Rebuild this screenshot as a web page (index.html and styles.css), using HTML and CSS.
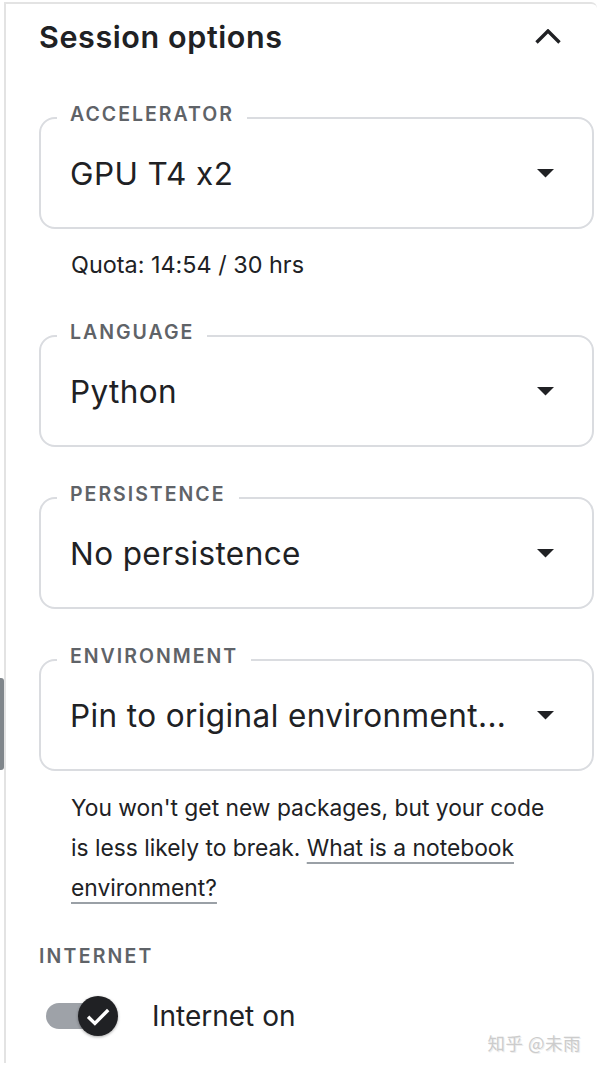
FILE: index.html
```html
<!DOCTYPE html>
<html lang="en">
<head>
<meta charset="utf-8">
<title>Session options</title>
<link rel="stylesheet" href="styles.css">
</head>
<body>
<div class="handle"></div>
<section class="panel">
  <header class="head">
    <h2 class="title">Session options</h2>
    <svg class="chev" width="28" height="16" viewBox="0 0 28 16"><polyline points="2.5,13.5 14,2 25.5,13.5"/></svg>
  </header>

  <fieldset class="field first">
    <legend>Accelerator</legend>
    <div class="select"><span>GPU T4 x2</span><svg class="caret" width="17" height="9" viewBox="0 0 17 9"><polygon points="0,0 17,0 8.5,8.5"/></svg></div>
  </fieldset>
  <p class="quota">Quota: 14:54 / 30 hrs</p>

  <fieldset class="field after-quota">
    <legend>Language</legend>
    <div class="select"><span>Python</span><svg class="caret" width="17" height="9" viewBox="0 0 17 9"><polygon points="0,0 17,0 8.5,8.5"/></svg></div>
  </fieldset>

  <fieldset class="field">
    <legend>Persistence</legend>
    <div class="select"><span>No persistence</span><svg class="caret" width="17" height="9" viewBox="0 0 17 9"><polygon points="0,0 17,0 8.5,8.5"/></svg></div>
  </fieldset>

  <fieldset class="field">
    <legend>Environment</legend>
    <div class="select"><span>Pin to original environment...</span><svg class="caret" width="17" height="9" viewBox="0 0 17 9"><polygon points="0,0 17,0 8.5,8.5"/></svg></div>
  </fieldset>

  <p class="help">You won't get new packages, but your code is less likely to break. <a class="link" href="#">What is a notebook environment?</a></p>

  <h3 class="section-label">Internet</h3>
  <div class="toggle-row">
    <div class="switch">
      <div class="track"></div>
      <div class="thumb"><svg width="34" height="34" viewBox="0 0 24 24"><polyline points="5,12.5 9.8,17.2 19.2,7.8"/></svg></div>
    </div>
    <span class="toggle-text">Internet on</span>
  </div>
</section>
<div class="watermark">知乎 @未雨</div>
</body>
</html>
```

FILE: styles.css
```css
html, body {
  margin: 0;
  padding: 0;
  background: #ffffff;
}

body {
  position: relative;
  width: 597px;
  height: 1067px;
  overflow: hidden;
  font-family: Inter, "Noto Sans", sans-serif;
  font-feature-settings: "calt" 0;
  color: #202124;
}

.handle {
  position: absolute;
  left: 0;
  top: 678px;
  width: 4px;
  height: 92px;
  background: #80868b;
  border-radius: 0 3px 3px 0;
}

.panel {
  margin: 2px 0 0 4px;
  border-top: 2px solid #e3e3e3;
  border-left: 2px solid #e3e3e3;
  border-top-right-radius: 6px;
  padding: 0 0 0 33px;
  height: 1061px;
  box-sizing: border-box;
}

.head {
  display: flex;
  align-items: center;
  justify-content: space-between;
  padding: 15px 35px 0 0;
}

.title {
  margin: 0;
  font-size: 30.5px;
  line-height: 36px;
  font-weight: 600;
  letter-spacing: 0.6px;
  color: #202124;
}

.chev polyline {
  fill: none;
  stroke: #202124;
  stroke-width: 3.4;
}

.field {
  margin: 36px 3px 0 0;
  padding: 0 0 14px 16px;
  border: 2px solid #dadce0;
  border-radius: 16px;
  min-width: 0;
}

.field.first {
  margin-top: 48px;
}

.field.after-quota {
  margin-top: 42px;
}

.field legend {
  padding: 0 13px 8px;
  font-size: 19.5px;
  line-height: 22px;
  font-weight: 600;
  letter-spacing: 2px;
  text-transform: uppercase;
  color: #5f6368;
}

.select {
  display: flex;
  align-items: center;
  justify-content: space-between;
  height: 80px;
  padding: 0 38px 0 13px;
  font-size: 31.5px;
  letter-spacing: 0.4px;
  color: #202124;
}

.caret polygon {
  fill: #202124;
}

.quota {
  margin: 22px 0 0 32px;
  font-size: 23.4px;
  line-height: 28px;
  color: #202124;
}

.help {
  margin: 17px 40px 0 32px;
  font-size: 22.8px;
  line-height: 40px;
  color: #202124;
}

.link {
  color: #202124;
  text-decoration: underline;
  text-decoration-color: #9aa0a6;
  text-decoration-thickness: 2px;
  text-underline-offset: 6px;
}

.section-label {
  margin: 36px 0 0 0;
  font-size: 19.5px;
  line-height: 24px;
  font-weight: 600;
  letter-spacing: 2.2px;
  text-transform: uppercase;
  color: #5f6368;
}

.toggle-row {
  display: flex;
  align-items: center;
  height: 40px;
  margin-top: 28px;
}

.switch {
  display: flex;
  align-items: center;
  margin-left: 7px;
}

.track {
  width: 52px;
  height: 26px;
  border-radius: 13px;
  background: #9ea2a8;
}

.thumb {
  width: 40px;
  height: 40px;
  margin-left: -20px;
  border-radius: 50%;
  background: #202124;
  box-shadow: 0 1px 3px rgba(0, 0, 0, 0.35);
  display: flex;
  align-items: center;
  justify-content: center;
}

.thumb polyline {
  fill: none;
  stroke: #ffffff;
  stroke-width: 2.4;
}

.toggle-text {
  margin-left: 34px;
  font-size: 28px;
  color: #202124;
}

.watermark {
  position: absolute;
  right: 16px;
  bottom: 12px;
  font-family: "Noto Sans CJK SC", sans-serif;
  font-size: 17.5px;
  letter-spacing: 0.5px;
  color: #cccccc;
  text-shadow: 1px 1px 0 #eeeeee;
}
```
